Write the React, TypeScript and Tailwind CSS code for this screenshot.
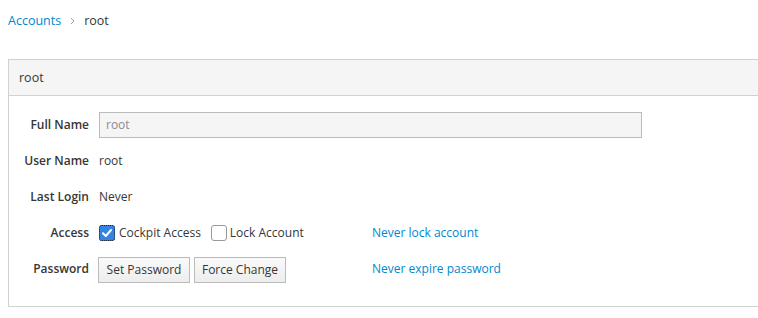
import React from "react";

function Checkbox({ checked }: { checked: boolean }) {
  if (checked) {
    return (
      <span className="relative inline-flex h-[16px] w-[16px] items-center justify-center rounded-[3px] bg-[#3584e4] outline-1 outline-dotted outline-[#1a1a1a] outline-offset-[-1px]">
        <svg width="12" height="12" viewBox="0 0 12 12" fill="none">
          <path d="M2 6.2 L4.8 9 L10 3" stroke="white" strokeWidth="2" strokeLinecap="round" strokeLinejoin="round" />
        </svg>
      </span>
    );
  }
  return <span className="inline-block h-[16px] w-[16px] rounded-[3px] border border-[#9a9a9a] bg-white" />;
}

function Row({ label, children }: { label: string; children: React.ReactNode }) {
  return (
    <div className="flex h-[26px] items-center">
      <div className="w-[80px] text-right font-semibold text-[#363636]">{label}</div>
      <div className="ml-[10px] flex items-center">{children}</div>
    </div>
  );
}

export default function App() {
  return (
    <div
      className="h-[318px] w-[758px] overflow-hidden bg-white text-[12px] text-[#363636]"
      style={{ fontFamily: '"Open Sans", "Noto Sans", sans-serif' }}
    >
      <div className="flex h-[41px] items-center pl-[8px] pt-[1px] text-[12.5px]">
        <span className="text-[#0088ce]">Accounts</span>
        <span className="mx-[9px] flex items-center">
          <svg width="5" height="8" viewBox="0 0 5 8" fill="none">
            <path d="M1 1 L4 4 L1 7" stroke="#a0a0a0" strokeWidth="1" />
          </svg>
        </span>
        <span className="text-[#363636]">root</span>
      </div>
      <div className="ml-[8px] mt-[18px] w-[780px] border border-[#d1d1d1] bg-white">
        <div className="flex h-[36px] items-center border-b border-[#d1d1d1] bg-[#f5f5f5] pl-[10px] pt-[2px] text-[12.5px]">
          root
        </div>
        <div className="flex flex-col gap-[10px] pb-[24px] pt-[16px]">
          <Row label="Full Name">
            <div className="flex h-[26px] w-[543px] items-center border border-[#bbbbbb] bg-[#f5f5f5] px-[6px] text-[#8b8d8f]">
              root
            </div>
          </Row>
          <Row label="User Name">
            <span>root</span>
          </Row>
          <Row label="Last Login">
            <span>Never</span>
          </Row>
          <Row label="Access">
            <div className="flex w-[273px] items-center">
              <Checkbox checked />
              <span className="ml-[4px]">Cockpit Access</span>
              <span className="ml-[10px] flex items-center">
                <Checkbox checked={false} />
              </span>
              <span className="ml-[3px]">Lock Account</span>
            </div>
            <span className="text-[#0088ce]">Never lock account</span>
          </Row>
          <Row label="Password">
            <div className="flex h-[26px] w-[273px] items-center gap-[4px] pt-[1px]">
              <button className="-ml-[1px] h-[26px] w-[92px] border border-[#bbbbbb] bg-gradient-to-b from-[#fafafa] to-[#ededed] text-[#363636]">
                Set Password
              </button>
              <button className="h-[26px] w-[92px] border border-[#bbbbbb] bg-gradient-to-b from-[#fafafa] to-[#ededed] text-[#363636]">
                Force Change
              </button>
            </div>
            <span className="text-[#0088ce]">Never expire password</span>
          </Row>
        </div>
      </div>
    </div>
  );
}
